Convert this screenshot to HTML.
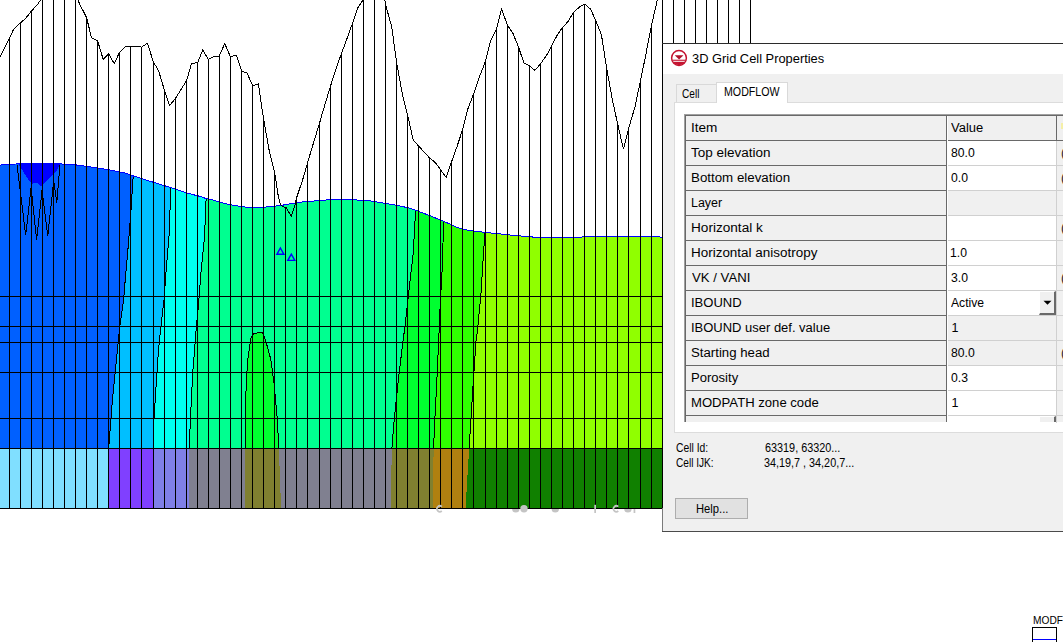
<!DOCTYPE html><html><head><meta charset="utf-8"><title>3D Grid Cell Properties</title><style>
html,body{margin:0;padding:0;background:#fff;}
body{width:1063px;height:642px;overflow:hidden;position:relative;font-family:"Liberation Sans",sans-serif;}
.abs{position:absolute;}
.t{position:absolute;white-space:nowrap;line-height:1;transform-origin:0 0;color:#000;}
</style></head><body>
<svg width="1063" height="642" viewBox="0 0 1063 642" style="position:absolute;left:0;top:0">
<defs><clipPath id="ct"><polygon points="-2.0,60.5 0.0,56.8 9.6,38.0 13.6,29.3 20.5,22.9 25.6,18.4 31.5,10.9 37.6,4.5 40.0,0.8 42.0,-3.0 76.0,-3.0 77.9,0.0 80.8,6.4 86.5,17.3 91.5,37.7 97.6,40.8 103.2,59.5 108.6,53.6 114.2,63.6 119.5,52.5 125.5,46.4 130.7,46.9 136.3,46.0 141.5,47.2 147.5,43.2 153.2,61.6 158.5,70.5 164.5,90.4 169.5,105.6 175.3,98.7 186.5,80.8 191.6,63.2 197.5,62.9 202.8,50.0 208.4,59.5 213.6,56.5 219.2,56.0 224.8,43.5 230.4,56.8 236.4,55.2 241.6,71.2 247.0,72.8 252.7,85.9 258.4,84.0 260.7,100.0 263.8,120.2 269.2,150.6 274.7,172.9 278.1,195.0 280.4,204.5 282.8,206.7 285.9,207.3 291.3,216.5 295.0,204.9 296.8,197.1 302.6,179.9 307.9,161.7 313.3,143.5 319.2,124.3 323.2,110.3 330.2,87.0 336.3,67.8 341.8,52.6 347.4,37.4 352.5,23.3 357.6,8.1 363.0,0.0 364.0,-3.0 384.5,-3.0 384.9,0.0 385.9,6.0 391.6,26.3 397.0,64.8 402.5,95.1 408.2,117.5 413.2,140.0 418.6,146.0 429.8,158.2 435.4,162.6 440.5,169.7 446.1,177.4 451.6,161.6 457.1,146.4 462.7,129.2 468.0,108.5 474.2,92.5 479.8,75.9 485.3,61.7 490.4,41.5 496.4,29.3 501.5,9.1 507.6,25.3 513.0,33.4 518.7,47.6 523.8,62.7 529.4,65.8 534.9,70.4 540.6,63.8 547.0,54.6 551.7,45.5 557.1,35.4 562.6,27.3 568.3,21.3 573.3,12.5 579.4,7.1 584.9,4.0 590.5,9.1 596.0,21.0 601.5,35.2 606.9,69.8 612.6,101.1 617.9,125.0 623.4,149.1 628.6,128.4 634.9,107.2 639.9,83.5 645.3,57.3 651.6,24.9 657.3,0.0 658.0,-3.0 760.0,-3.0 760,520 -2,520"/></clipPath>
<clipPath id="cw"><polygon points="-1.0,165.1 0.0,165.1 15.6,164.0 23.4,163.2 52.9,163.2 62.3,164.0 77.8,165.1 93.4,167.3 109.0,169.8 124.6,172.9 133.2,175.9 153.1,182.2 170.6,187.6 188.2,193.4 200.0,196.4 205.1,198.2 210.2,199.3 215.2,200.6 220.3,202.5 225.4,203.5 229.6,204.6 235.6,205.5 240.6,206.5 250.0,207.5 265.2,207.5 266.9,206.5 275.4,206.5 277.0,205.5 283.0,205.5 283.8,204.6 290.3,203.9 299.7,202.2 309.0,201.4 318.8,200.6 330.0,199.7 341.0,199.2 351.0,199.6 360.0,200.2 371.4,201.0 384.0,203.2 398.0,205.5 408.0,207.8 415.6,210.2 430.8,216.0 443.6,221.4 450.6,224.3 457.6,227.7 463.0,229.3 470.5,230.5 485.0,232.4 500.9,234.0 512.0,235.2 520.8,236.0 533.6,237.1 581.6,237.1 583.0,236.3 658.0,236.3 660.0,237.1 663.0,237.1 663,449 -1,449"/></clipPath></defs>
<g clip-path="url(#cw)" shape-rendering="crispEdges">
<polygon points="-1.0,150.0 -1.0,150.0 -1.0,448.5 108.7,448.5 112.4,399.7 117.4,349.8 119.9,326.2 123.6,300.0 125.1,281.5 128.6,241.8 130.9,211.4 133.2,175.9 133.2,150.0" fill="#0060ff"/>
<polygon points="133.2,150.0 133.2,175.9 130.9,211.4 128.6,241.8 125.1,281.5 123.6,300.0 119.9,326.2 117.4,349.8 112.4,399.7 108.7,448.5 153.5,448.5 154.0,419.6 156.0,387.0 158.5,349.8 161.0,326.0 164.0,300.0 166.0,272.2 169.5,230.1 170.6,187.6 170.6,150.0" fill="#00bfff"/>
<polygon points="170.6,150.0 170.6,187.6 169.5,230.1 166.0,272.2 164.0,300.0 161.0,326.0 158.5,349.8 156.0,387.0 154.0,419.6 153.5,448.5 189.2,448.5 190.4,419.6 192.6,374.7 195.9,332.4 198.9,300.0 201.0,272.2 204.5,237.1 206.1,198.6 206.1,150.0" fill="#00fff0"/>
<polygon points="206.1,150.0 206.1,198.6 204.5,237.1 201.0,272.2 198.9,300.0 195.9,332.4 192.6,374.7 190.4,419.6 189.2,448.5 391.9,448.5 393.8,424.2 398.1,382.1 403.1,340.0 405.1,325.9 408.6,293.2 413.2,253.4 415.6,210.2 415.6,150.0" fill="#00ff90"/>
<polygon points="415.6,150.0 415.6,210.2 413.2,253.4 408.6,293.2 405.1,325.9 403.1,340.0 398.1,382.1 393.8,424.2 391.9,448.5 433.6,448.5 434.6,424.0 436.8,382.0 438.7,340.0 440.1,307.2 442.4,265.1 443.6,221.4 443.6,150.0" fill="#00ff30"/>
<polygon points="443.6,150.0 443.6,221.4 442.4,265.1 440.1,307.2 438.7,340.0 436.8,382.0 434.6,424.0 433.6,448.5 469.1,448.5 470.6,424.2 473.8,373.7 476.1,340.0 477.5,330.5 481.0,293.2 483.3,255.8 485.0,232.4 485.0,150.0" fill="#30ff00"/>
<polygon points="485.0,150.0 485.0,232.4 483.3,255.8 481.0,293.2 477.5,330.5 476.1,340.0 473.8,373.7 470.6,424.2 469.1,448.5 663.0,448.5 663.0,150.0 663.0,150.0" fill="#90ff00"/>
<polygon points="245.2,448.5 246.1,385.2 247.8,359.0 251.0,337.8 253.7,333.5 262.5,332.2 265.8,341.0 270.7,359.0 273.9,381.9 277.2,417.8 278.8,448.5" fill="#00ff30"/>
<polygon points="18.7,160.0 18.7,164.3 27.2,178.0 31.9,183.9 36.6,182.7 41.3,186.1 49.8,178.0 56.8,170.2 59.9,164.3 59.9,160.0" fill="#0000ff"/>
</g>
<g shape-rendering="crispEdges">
<polygon points="-1.0,448 108.7,448 107.5,508 -1.0,508" fill="#80dfff"/>
<polygon points="108.7,448 153.5,448 153.0,508 107.5,508" fill="#8040ff"/>
<polygon points="153.5,448 189.2,448 189.0,508 153.0,508" fill="#8080e8"/>
<polygon points="189.2,448 391.9,448 390.5,508 189.0,508" fill="#808090"/>
<polygon points="391.9,448 433.7,448 432.5,508 390.5,508" fill="#808030"/>
<polygon points="433.7,448 469.2,448 465.5,508 432.5,508" fill="#b08010"/>
<polygon points="469.2,448 663.0,448 663.0,508 465.5,508" fill="#108000"/>
<polygon points="244.5,448.0 278.8,448.0 281.1,508.0 245.2,508.0" fill="#808030"/>
</g>
<g fill="none" stroke="#000" stroke-width="1" shape-rendering="crispEdges">
<polyline points="133.2,175.9 130.9,211.4 128.6,241.8 125.1,281.5 123.6,300.0 119.9,326.2 117.4,349.8 112.4,399.7 108.7,448.5"/>
<polyline points="170.6,187.6 169.5,230.1 166.0,272.2 164.0,300.0 161.0,326.0 158.5,349.8 156.0,387.0 154.0,419.6 153.5,448.5"/>
<polyline points="206.1,198.6 204.5,237.1 201.0,272.2 198.9,300.0 195.9,332.4 192.6,374.7 190.4,419.6 189.2,448.5"/>
<polyline points="415.6,210.2 413.2,253.4 408.6,293.2 405.1,325.9 403.1,340.0 398.1,382.1 393.8,424.2 391.9,448.5"/>
<polyline points="443.6,221.4 442.4,265.1 440.1,307.2 438.7,340.0 436.8,382.0 434.6,424.0 433.6,448.5"/>
<polyline points="485.0,232.4 483.3,255.8 481.0,293.2 477.5,330.5 476.1,340.0 473.8,373.7 470.6,424.2 469.1,448.5"/>
<polyline points="245.2,448.5 246.1,385.2 247.8,359.0 251.0,337.8 253.7,333.5 262.5,332.2 265.8,341.0 270.7,359.0 273.9,381.9 277.2,417.8 278.8,448.5"/>
<polyline points="17.1,165.1 25.7,235.3 31.1,187.4 36.6,240.0 42.0,190.5 47.8,235.6 53.7,181.1 56.8,202.9 59.9,165.1"/>
</g>
<polyline points="-1.0,165.1 0.0,165.1 15.6,164.0 23.4,163.2 52.9,163.2 62.3,164.0 77.8,165.1 93.4,167.3 109.0,169.8 124.6,172.9 133.2,175.9 153.1,182.2 170.6,187.6 188.2,193.4 200.0,196.4 205.1,198.2 210.2,199.3 215.2,200.6 220.3,202.5 225.4,203.5 229.6,204.6 235.6,205.5 240.6,206.5 250.0,207.5 265.2,207.5 266.9,206.5 275.4,206.5 277.0,205.5 283.0,205.5 283.8,204.6 290.3,203.9 299.7,202.2 309.0,201.4 318.8,200.6 330.0,199.7 341.0,199.2 351.0,199.6 360.0,200.2 371.4,201.0 384.0,203.2 398.0,205.5 408.0,207.8 415.6,210.2 430.8,216.0 443.6,221.4 450.6,224.3 457.6,227.7 463.0,229.3 470.5,230.5 485.0,232.4 500.9,234.0 512.0,235.2 520.8,236.0 533.6,237.1 581.6,237.1 583.0,236.3 658.0,236.3 660.0,237.1 663.0,237.1" fill="none" stroke="#0000ff" stroke-width="1" shape-rendering="crispEdges"/>
<g clip-path="url(#ct)" stroke="#000" stroke-width="1" shape-rendering="crispEdges">
<line x1="9.5" y1="-2" x2="9.5" y2="508.5"/>
<line x1="20.5" y1="-2" x2="20.5" y2="508.5"/>
<line x1="31.5" y1="-2" x2="31.5" y2="508.5"/>
<line x1="42.5" y1="-2" x2="42.5" y2="508.5"/>
<line x1="53.5" y1="-2" x2="53.5" y2="508.5"/>
<line x1="64.5" y1="-2" x2="64.5" y2="508.5"/>
<line x1="75.5" y1="-2" x2="75.5" y2="508.5"/>
<line x1="86.5" y1="-2" x2="86.5" y2="508.5"/>
<line x1="97.5" y1="-2" x2="97.5" y2="508.5"/>
<line x1="108.5" y1="-2" x2="108.5" y2="508.5"/>
<line x1="119.5" y1="-2" x2="119.5" y2="508.5"/>
<line x1="130.5" y1="-2" x2="130.5" y2="508.5"/>
<line x1="141.5" y1="-2" x2="141.5" y2="508.5"/>
<line x1="153.5" y1="-2" x2="153.5" y2="508.5"/>
<line x1="164.5" y1="-2" x2="164.5" y2="508.5"/>
<line x1="175.5" y1="-2" x2="175.5" y2="508.5"/>
<line x1="186.5" y1="-2" x2="186.5" y2="508.5"/>
<line x1="197.5" y1="-2" x2="197.5" y2="508.5"/>
<line x1="208.5" y1="-2" x2="208.5" y2="508.5"/>
<line x1="219.5" y1="-2" x2="219.5" y2="508.5"/>
<line x1="230.5" y1="-2" x2="230.5" y2="508.5"/>
<line x1="241.5" y1="-2" x2="241.5" y2="508.5"/>
<line x1="252.5" y1="-2" x2="252.5" y2="508.5"/>
<line x1="263.5" y1="-2" x2="263.5" y2="508.5"/>
<line x1="274.5" y1="-2" x2="274.5" y2="508.5"/>
<line x1="285.5" y1="-2" x2="285.5" y2="508.5"/>
<line x1="296.5" y1="-2" x2="296.5" y2="508.5"/>
<line x1="307.5" y1="-2" x2="307.5" y2="508.5"/>
<line x1="319.5" y1="-2" x2="319.5" y2="508.5"/>
<line x1="330.5" y1="-2" x2="330.5" y2="508.5"/>
<line x1="341.5" y1="-2" x2="341.5" y2="508.5"/>
<line x1="352.5" y1="-2" x2="352.5" y2="508.5"/>
<line x1="363.5" y1="-2" x2="363.5" y2="508.5"/>
<line x1="374.5" y1="-2" x2="374.5" y2="508.5"/>
<line x1="385.5" y1="-2" x2="385.5" y2="508.5"/>
<line x1="396.5" y1="-2" x2="396.5" y2="508.5"/>
<line x1="407.5" y1="-2" x2="407.5" y2="508.5"/>
<line x1="418.5" y1="-2" x2="418.5" y2="508.5"/>
<line x1="429.5" y1="-2" x2="429.5" y2="508.5"/>
<line x1="440.5" y1="-2" x2="440.5" y2="508.5"/>
<line x1="451.5" y1="-2" x2="451.5" y2="508.5"/>
<line x1="462.5" y1="-2" x2="462.5" y2="508.5"/>
<line x1="473.5" y1="-2" x2="473.5" y2="508.5"/>
<line x1="485.5" y1="-2" x2="485.5" y2="508.5"/>
<line x1="496.5" y1="-2" x2="496.5" y2="508.5"/>
<line x1="507.5" y1="-2" x2="507.5" y2="508.5"/>
<line x1="518.5" y1="-2" x2="518.5" y2="508.5"/>
<line x1="529.5" y1="-2" x2="529.5" y2="508.5"/>
<line x1="540.5" y1="-2" x2="540.5" y2="508.5"/>
<line x1="551.5" y1="-2" x2="551.5" y2="508.5"/>
<line x1="562.5" y1="-2" x2="562.5" y2="508.5"/>
<line x1="573.5" y1="-2" x2="573.5" y2="508.5"/>
<line x1="584.5" y1="-2" x2="584.5" y2="508.5"/>
<line x1="595.5" y1="-2" x2="595.5" y2="508.5"/>
<line x1="606.5" y1="-2" x2="606.5" y2="508.5"/>
<line x1="617.5" y1="-2" x2="617.5" y2="508.5"/>
<line x1="628.5" y1="-2" x2="628.5" y2="508.5"/>
<line x1="640.5" y1="-2" x2="640.5" y2="508.5"/>
<line x1="651.5" y1="-2" x2="651.5" y2="508.5"/>
<line x1="662.5" y1="-2" x2="662.5" y2="508.5"/>
<line x1="673.5" y1="-2" x2="673.5" y2="44.0"/>
<line x1="684.5" y1="-2" x2="684.5" y2="44.0"/>
<line x1="695.5" y1="-2" x2="695.5" y2="44.0"/>
<line x1="706.5" y1="-2" x2="706.5" y2="44.0"/>
<line x1="717.5" y1="-2" x2="717.5" y2="44.0"/>
<line x1="728.5" y1="-2" x2="728.5" y2="44.0"/>
<line x1="739.5" y1="-2" x2="739.5" y2="44.0"/>
<line x1="750.5" y1="-2" x2="750.5" y2="44.0"/>
</g>
<g stroke="#000" stroke-width="1" shape-rendering="crispEdges">
<line x1="0" y1="296.5" x2="663" y2="296.5"/>
<line x1="0" y1="326.5" x2="663" y2="326.5"/>
<line x1="0" y1="342.5" x2="663" y2="342.5"/>
<line x1="0" y1="372.5" x2="663" y2="372.5"/>
<line x1="0" y1="418.5" x2="663" y2="418.5"/>
<line x1="0" y1="448.5" x2="663" y2="448.5"/>
<line x1="0" y1="508.5" x2="663" y2="508.5"/>
</g>
<polyline points="-2.0,60.5 0.0,56.8 9.6,38.0 13.6,29.3 20.5,22.9 25.6,18.4 31.5,10.9 37.6,4.5 40.0,0.8 42.0,-3.0 76.0,-3.0 77.9,0.0 80.8,6.4 86.5,17.3 91.5,37.7 97.6,40.8 103.2,59.5 108.6,53.6 114.2,63.6 119.5,52.5 125.5,46.4 130.7,46.9 136.3,46.0 141.5,47.2 147.5,43.2 153.2,61.6 158.5,70.5 164.5,90.4 169.5,105.6 175.3,98.7 186.5,80.8 191.6,63.2 197.5,62.9 202.8,50.0 208.4,59.5 213.6,56.5 219.2,56.0 224.8,43.5 230.4,56.8 236.4,55.2 241.6,71.2 247.0,72.8 252.7,85.9 258.4,84.0 260.7,100.0 263.8,120.2 269.2,150.6 274.7,172.9 278.1,195.0 280.4,204.5 282.8,206.7 285.9,207.3 291.3,216.5 295.0,204.9 296.8,197.1 302.6,179.9 307.9,161.7 313.3,143.5 319.2,124.3 323.2,110.3 330.2,87.0 336.3,67.8 341.8,52.6 347.4,37.4 352.5,23.3 357.6,8.1 363.0,0.0 364.0,-3.0 384.5,-3.0 384.9,0.0 385.9,6.0 391.6,26.3 397.0,64.8 402.5,95.1 408.2,117.5 413.2,140.0 418.6,146.0 429.8,158.2 435.4,162.6 440.5,169.7 446.1,177.4 451.6,161.6 457.1,146.4 462.7,129.2 468.0,108.5 474.2,92.5 479.8,75.9 485.3,61.7 490.4,41.5 496.4,29.3 501.5,9.1 507.6,25.3 513.0,33.4 518.7,47.6 523.8,62.7 529.4,65.8 534.9,70.4 540.6,63.8 547.0,54.6 551.7,45.5 557.1,35.4 562.6,27.3 568.3,21.3 573.3,12.5 579.4,7.1 584.9,4.0 590.5,9.1 596.0,21.0 601.5,35.2 606.9,69.8 612.6,101.1 617.9,125.0 623.4,149.1 628.6,128.4 634.9,107.2 639.9,83.5 645.3,57.3 651.6,24.9 657.3,0.0 658.0,-3.0 760.0,-3.0" fill="none" stroke="#000" stroke-width="1" shape-rendering="crispEdges"/>
<path d="M280.4 248.0 L283.9 254.3 L276.9 254.3 Z" fill="none" stroke="#0000ff" stroke-width="1.4"/>
<path d="M291.3 254.1 L294.8 260.4 L287.8 260.4 Z" fill="none" stroke="#0000ff" stroke-width="1.4"/>
<defs><clipPath id="below"><rect x="0" y="509" width="663" height="10"/></clipPath></defs>
<line x1="0" y1="508.5" x2="663" y2="508.5" stroke="#000" shape-rendering="crispEdges"/>
<circle cx="515.8" cy="508.8" r="3.7" fill="#c4c4c4" clip-path="url(#below)"/>
<circle cx="555.3" cy="508.8" r="3.7" fill="#c4c4c4" clip-path="url(#below)"/>
<circle cx="627.9" cy="508.8" r="3.7" fill="#c4c4c4" clip-path="url(#below)"/>
<circle cx="524" cy="508.8" r="3.7" fill="#c4c4c4"/>
<path d="M441.8 506.6 A2.9 2.9 0 1 0 441.8 511" fill="none" stroke="#c4c4c4" stroke-width="1.7"/>
<path d="M618.3 506.6 A2.9 2.9 0 1 0 618.3 511" fill="none" stroke="#c4c4c4" stroke-width="1.7"/>
<rect x="594.3" y="504.8" width="1.7" height="8.2" fill="#c4c4c4"/>
<rect x="633.6" y="509" width="1.7" height="4" fill="#c4c4c4"/>
<rect x="1032.5" y="627.5" width="24" height="20" fill="#fff" stroke="#000" shape-rendering="crispEdges"/>
<line x1="1033" y1="639.5" x2="1056" y2="639.5" stroke="#0000ff" shape-rendering="crispEdges"/>
<text x="1033" y="624" font-family="Liberation Sans, sans-serif" font-size="10.2" fill="#000">MODFLOW</text>
</svg>
<div class="abs" style="left:662px;top:43px;width:401px;height:489px;background:#f0f0f0;"></div>
<div class="abs" style="left:662px;top:43px;width:401px;height:1px;background:#2b2b2b;"></div>
<div class="abs" style="left:662px;top:44px;width:1px;height:464px;background:#000;"></div>
<div class="abs" style="left:662px;top:508px;width:1px;height:24px;background:#7a7a7a;"></div>
<div class="abs" style="left:662px;top:531px;width:401px;height:1px;background:#4a4a4a;"></div>
<div class="abs" style="left:663px;top:44px;width:400px;height:30px;background:#fff;"></div>
<svg class="abs" style="left:670px;top:49px" width="18" height="18" viewBox="0 0 18 18"><defs><clipPath id="ic"><circle cx="9" cy="9" r="7.2"/></clipPath></defs><circle cx="9" cy="9" r="7.4" fill="#fff" stroke="#c4122f" stroke-width="1.5"/><path d="M4.7 6.2 L13.5 6.2 L9.1 10.4 Z" fill="#b0102a"/><rect x="2.5" y="10.7" width="13" height="1.1" fill="#c4122f"/><rect x="0" y="12.8" width="18" height="5" fill="#c4122f" clip-path="url(#ic)"/></svg>
<div class="abs" style="left:676px;top:84px;width:41px;height:19px;background:#f0f0f0;box-sizing:border-box;border:1px solid #d9d9d9;border-bottom:none;"></div>
<div class="abs" style="left:674px;top:102px;width:389px;height:331px;background:#fff;box-sizing:border-box;border:1px solid #dcdcdc;border-right:none;"></div>
<div class="abs" style="left:716px;top:82px;width:72px;height:21px;background:#fff;box-sizing:border-box;border:1px solid #d9d9d9;border-bottom:none;"></div>
<div class="abs" style="left:684px;top:114px;width:379px;height:308px;background:#a0a0a0;"></div>
<div class="abs" style="left:685px;top:115px;width:378px;height:307px;background:#696969;"></div>
<div class="abs" style="left:686px;top:116px;width:377px;height:306px;background:#fff;"></div>
<div class="abs" style="left:686px;top:116px;width:260px;height:24px;background:#f0f0f0;"></div>
<div class="abs" style="left:948px;top:116px;width:108px;height:24px;background:#f0f0f0;"></div>
<div class="abs" style="left:1057px;top:116px;width:6px;height:24px;background:#f0f0f0;"></div>
<div class="abs" style="left:686px;top:140px;width:261px;height:1px;background:#696969;"></div>
<div class="abs" style="left:947px;top:140px;width:116px;height:1px;background:#696969;"></div>
<div class="abs" style="left:1056px;top:116px;width:1px;height:25px;background:#696969;"></div>
<div class="abs" style="left:686px;top:141px;width:260px;height:24px;background:#f0f0f0;"></div>
<div class="abs" style="left:948px;top:141px;width:108px;height:24px;background:#fff;"></div>
<div class="abs" style="left:1057px;top:141px;width:6px;height:24px;background:#f0f0f0;"></div>
<div class="abs" style="left:686px;top:165px;width:261px;height:1px;background:#696969;"></div>
<div class="abs" style="left:947px;top:165px;width:116px;height:1px;background:#d0d0d0;"></div>
<div class="abs" style="left:1056px;top:141px;width:1px;height:25px;background:#d0d0d0;"></div>
<div class="abs" style="left:686px;top:166px;width:260px;height:24px;background:#f0f0f0;"></div>
<div class="abs" style="left:948px;top:166px;width:108px;height:24px;background:#fff;"></div>
<div class="abs" style="left:1057px;top:166px;width:6px;height:24px;background:#f0f0f0;"></div>
<div class="abs" style="left:686px;top:190px;width:261px;height:1px;background:#696969;"></div>
<div class="abs" style="left:947px;top:190px;width:116px;height:1px;background:#d0d0d0;"></div>
<div class="abs" style="left:1056px;top:166px;width:1px;height:25px;background:#d0d0d0;"></div>
<div class="abs" style="left:686px;top:191px;width:260px;height:24px;background:#f0f0f0;"></div>
<div class="abs" style="left:948px;top:191px;width:108px;height:24px;background:#f0f0f0;"></div>
<div class="abs" style="left:1057px;top:191px;width:6px;height:24px;background:#f0f0f0;"></div>
<div class="abs" style="left:686px;top:215px;width:261px;height:1px;background:#696969;"></div>
<div class="abs" style="left:947px;top:215px;width:116px;height:1px;background:#d0d0d0;"></div>
<div class="abs" style="left:1056px;top:191px;width:1px;height:25px;background:#d0d0d0;"></div>
<div class="abs" style="left:686px;top:216px;width:260px;height:24px;background:#f0f0f0;"></div>
<div class="abs" style="left:948px;top:216px;width:108px;height:24px;background:#fff;"></div>
<div class="abs" style="left:1057px;top:216px;width:6px;height:24px;background:#f0f0f0;"></div>
<div class="abs" style="left:686px;top:240px;width:261px;height:1px;background:#696969;"></div>
<div class="abs" style="left:947px;top:240px;width:116px;height:1px;background:#d0d0d0;"></div>
<div class="abs" style="left:1056px;top:216px;width:1px;height:25px;background:#d0d0d0;"></div>
<div class="abs" style="left:686px;top:241px;width:260px;height:24px;background:#f0f0f0;"></div>
<div class="abs" style="left:948px;top:241px;width:108px;height:24px;background:#fff;"></div>
<div class="abs" style="left:1057px;top:241px;width:6px;height:24px;background:#f0f0f0;"></div>
<div class="abs" style="left:686px;top:265px;width:261px;height:1px;background:#696969;"></div>
<div class="abs" style="left:947px;top:265px;width:116px;height:1px;background:#d0d0d0;"></div>
<div class="abs" style="left:1056px;top:241px;width:1px;height:25px;background:#d0d0d0;"></div>
<div class="abs" style="left:686px;top:266px;width:260px;height:24px;background:#f0f0f0;"></div>
<div class="abs" style="left:948px;top:266px;width:108px;height:24px;background:#fff;"></div>
<div class="abs" style="left:1057px;top:266px;width:6px;height:24px;background:#f0f0f0;"></div>
<div class="abs" style="left:686px;top:290px;width:261px;height:1px;background:#696969;"></div>
<div class="abs" style="left:947px;top:290px;width:116px;height:1px;background:#d0d0d0;"></div>
<div class="abs" style="left:1056px;top:266px;width:1px;height:25px;background:#d0d0d0;"></div>
<div class="abs" style="left:686px;top:291px;width:260px;height:24px;background:#f0f0f0;"></div>
<div class="abs" style="left:948px;top:291px;width:108px;height:24px;background:#fff;"></div>
<div class="abs" style="left:1057px;top:291px;width:6px;height:24px;background:#f0f0f0;"></div>
<div class="abs" style="left:686px;top:315px;width:261px;height:1px;background:#696969;"></div>
<div class="abs" style="left:947px;top:315px;width:116px;height:1px;background:#d0d0d0;"></div>
<div class="abs" style="left:1056px;top:291px;width:1px;height:25px;background:#d0d0d0;"></div>
<div class="abs" style="left:686px;top:316px;width:260px;height:24px;background:#f0f0f0;"></div>
<div class="abs" style="left:948px;top:316px;width:108px;height:24px;background:#f0f0f0;"></div>
<div class="abs" style="left:1057px;top:316px;width:6px;height:24px;background:#f0f0f0;"></div>
<div class="abs" style="left:686px;top:340px;width:261px;height:1px;background:#696969;"></div>
<div class="abs" style="left:947px;top:340px;width:116px;height:1px;background:#d0d0d0;"></div>
<div class="abs" style="left:1056px;top:316px;width:1px;height:25px;background:#d0d0d0;"></div>
<div class="abs" style="left:686px;top:341px;width:260px;height:24px;background:#f0f0f0;"></div>
<div class="abs" style="left:948px;top:341px;width:108px;height:24px;background:#f0f0f0;"></div>
<div class="abs" style="left:1057px;top:341px;width:6px;height:24px;background:#f0f0f0;"></div>
<div class="abs" style="left:686px;top:365px;width:261px;height:1px;background:#696969;"></div>
<div class="abs" style="left:947px;top:365px;width:116px;height:1px;background:#d0d0d0;"></div>
<div class="abs" style="left:1056px;top:341px;width:1px;height:25px;background:#d0d0d0;"></div>
<div class="abs" style="left:686px;top:366px;width:260px;height:24px;background:#f0f0f0;"></div>
<div class="abs" style="left:948px;top:366px;width:108px;height:24px;background:#fff;"></div>
<div class="abs" style="left:1057px;top:366px;width:6px;height:24px;background:#f0f0f0;"></div>
<div class="abs" style="left:686px;top:390px;width:261px;height:1px;background:#696969;"></div>
<div class="abs" style="left:947px;top:390px;width:116px;height:1px;background:#d0d0d0;"></div>
<div class="abs" style="left:1056px;top:366px;width:1px;height:25px;background:#d0d0d0;"></div>
<div class="abs" style="left:686px;top:391px;width:260px;height:24px;background:#f0f0f0;"></div>
<div class="abs" style="left:948px;top:391px;width:108px;height:24px;background:#fff;"></div>
<div class="abs" style="left:1057px;top:391px;width:6px;height:24px;background:#f0f0f0;"></div>
<div class="abs" style="left:686px;top:415px;width:261px;height:1px;background:#696969;"></div>
<div class="abs" style="left:947px;top:415px;width:116px;height:1px;background:#d0d0d0;"></div>
<div class="abs" style="left:1056px;top:391px;width:1px;height:25px;background:#d0d0d0;"></div>
<div class="abs" style="left:686px;top:416px;width:260px;height:6px;background:#f0f0f0;"></div>
<div class="abs" style="left:948px;top:416px;width:108px;height:6px;background:#fff;"></div>
<div class="abs" style="left:1057px;top:416px;width:6px;height:6px;background:#f0f0f0;"></div>
<div class="abs" style="left:1056px;top:416px;width:1px;height:7px;background:#d0d0d0;"></div>
<div class="abs" style="left:946px;top:116px;width:1px;height:306px;background:#696969;"></div>
<div class="abs" style="left:947px;top:116px;width:1px;height:306px;background:#fff;"></div>
<div class="abs" style="left:1039px;top:291px;width:17px;height:24px;background:#f0f0f0;box-sizing:border-box;border-left:1px solid #fff;border-top:1px solid #fff;border-right:2px solid #696969;border-bottom:2px solid #696969;"></div>
<svg class="abs" style="left:1043px;top:300px" width="9" height="6" viewBox="0 0 9 6"><path d="M0.5 0.8 L8.5 0.8 L4.5 4.8 Z" fill="#000"/></svg>
<div class="abs" style="left:1039px;top:416px;width:17px;height:6px;background:#f0f0f0;box-sizing:border-box;border-left:1px solid #fff;border-top:1px solid #fff;border-right:2px solid #696969;"></div>
<div class="t" style="left:1061px;top:147px;font-size:12.5px;color:#1a1a1a;width:3px;overflow:hidden">(</div>
<div class="t" style="left:1061px;top:172px;font-size:12.5px;color:#1a1a1a;width:3px;overflow:hidden">(</div>
<div class="t" style="left:1061px;top:222px;font-size:12.5px;color:#1a1a1a;width:3px;overflow:hidden">(</div>
<div class="t" style="left:1061px;top:272px;font-size:12.5px;color:#1a1a1a;width:3px;overflow:hidden">(</div>
<div class="t" style="left:1061px;top:347px;font-size:12.5px;color:#1a1a1a;width:3px;overflow:hidden">(</div>
<div class="abs" style="left:1061px;top:123px;width:2px;height:6px;background:#f5f0a8;"></div>
<div class="abs" style="left:675px;top:498px;width:73px;height:21px;background:#e1e1e1;box-sizing:border-box;border:1px solid #adadad;"></div>
<span class="t" id="r0" style="left:690.70px;top:122.42px;font-size:12.5px;transform:scaleX(1.0870);color:#000">Item</span>
<span class="t" id="r1" style="left:691.30px;top:147.42px;font-size:12.5px;transform:scaleX(1.0795);color:#000">Top elevation</span>
<span class="t" id="r2" style="left:690.70px;top:172.42px;font-size:12.5px;transform:scaleX(1.0652);color:#000">Bottom elevation</span>
<span class="t" id="r3" style="left:690.70px;top:197.42px;font-size:12.5px;transform:scaleX(0.9971);color:#000">Layer</span>
<span class="t" id="r4" style="left:690.70px;top:222.42px;font-size:12.5px;transform:scaleX(1.0881);color:#000">Horizontal k</span>
<span class="t" id="r5" style="left:690.70px;top:247.42px;font-size:12.5px;transform:scaleX(1.0761);color:#000">Horizontal anisotropy</span>
<span class="t" id="r6" style="left:691.70px;top:272.42px;font-size:12.5px;transform:scaleX(1.0545);color:#000">VK / VANI</span>
<span class="t" id="r7" style="left:690.70px;top:297.42px;font-size:12.5px;transform:scaleX(1.0421);color:#000">IBOUND</span>
<span class="t" id="r8" style="left:690.70px;top:322.42px;font-size:12.5px;transform:scaleX(1.0376);color:#000">IBOUND user def. value</span>
<span class="t" id="r9" style="left:691.20px;top:347.42px;font-size:12.5px;transform:scaleX(1.0570);color:#000">Starting head</span>
<span class="t" id="r10" style="left:690.70px;top:372.42px;font-size:12.5px;transform:scaleX(1.0449);color:#000">Porosity</span>
<span class="t" id="r11" style="left:690.70px;top:397.42px;font-size:12.5px;transform:scaleX(1.0488);color:#000">MODPATH zone code</span>
<span class="t" id="v0" style="left:951.40px;top:122.42px;font-size:12.5px;transform:scaleX(1.0387);color:#000">Value</span>
<span class="t" id="v1" style="left:951.40px;top:147.42px;font-size:12.5px;transform:scaleX(0.9750);color:#000">80.0</span>
<span class="t" id="v2" style="left:951.40px;top:172.42px;font-size:12.5px;transform:scaleX(0.9750);color:#000">0.0</span>
<span class="t" id="v5" style="left:950.40px;top:247.42px;font-size:12.5px;transform:scaleX(0.9750);color:#000">1.0</span>
<span class="t" id="v6" style="left:951.40px;top:272.42px;font-size:12.5px;transform:scaleX(0.9750);color:#000">3.0</span>
<span class="t" id="v7" style="left:951.40px;top:297.42px;font-size:12.5px;transform:scaleX(0.9724);color:#000">Active</span>
<span class="t" id="v8" style="left:951.40px;top:322.42px;font-size:12.5px;transform:scaleX(1.0000);color:#000">1</span>
<span class="t" id="v9" style="left:951.40px;top:347.42px;font-size:12.5px;transform:scaleX(0.9750);color:#000">80.0</span>
<span class="t" id="v10" style="left:951.40px;top:372.42px;font-size:12.5px;transform:scaleX(0.9750);color:#000">0.3</span>
<span class="t" id="v11" style="left:951.40px;top:397.42px;font-size:12.5px;transform:scaleX(1.0000);color:#000">1</span>
<span class="t" id="title" style="left:692.10px;top:51.80px;font-size:13px;transform:scaleX(0.9888);color:#000">3D Grid Cell Properties</span>
<span class="t" id="tab1" style="left:682.20px;top:88.44px;font-size:12px;transform:scaleX(0.8409);color:#000">Cell</span>
<span class="t" id="tab2" style="left:723.60px;top:85.54px;font-size:12px;transform:scaleX(0.8860);color:#000">MODFLOW</span>
<span class="t" id="cid" style="left:676.40px;top:441.54px;font-size:12px;transform:scaleX(0.8620);color:#000">Cell Id:</span>
<span class="t" id="cidv" style="left:764.60px;top:441.54px;font-size:12px;transform:scaleX(0.9036);color:#000">63319, 63320...</span>
<span class="t" id="cijk" style="left:676.40px;top:457.34px;font-size:12px;transform:scaleX(0.8433);color:#000">Cell IJK:</span>
<span class="t" id="cijkv" style="left:764.40px;top:457.34px;font-size:12px;transform:scaleX(0.9010);color:#000">34,19,7 , 34,20,7...</span>
<span class="t" id="help" style="left:696.20px;top:502.64px;font-size:12px;transform:scaleX(0.9336);color:#000">Help...</span>
</body></html>
